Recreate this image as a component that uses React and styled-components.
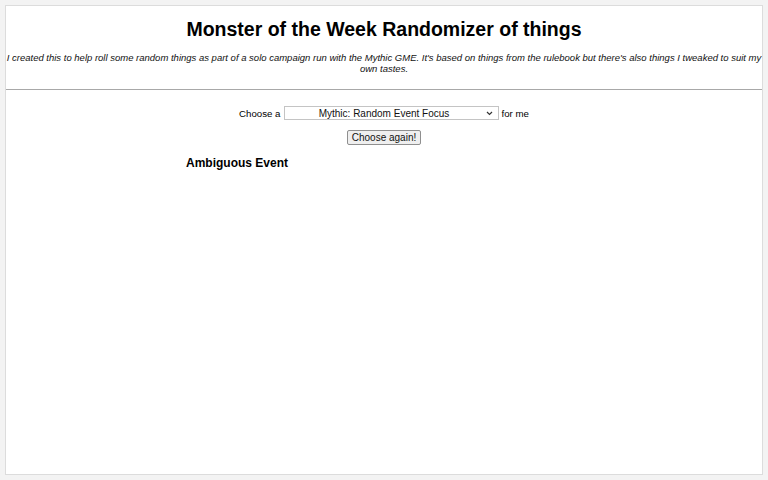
import React, { useState } from 'react';
import styled, { createGlobalStyle } from 'styled-components';

const GlobalStyle = createGlobalStyle`
  html, body {
    margin: 0;
    padding: 0;
    background: #f3f3f3;
    font-family: "Liberation Sans", Arial, sans-serif;
  }
`;

const Page = styled.div`
  padding: 5px;
  height: 480px;
  box-sizing: border-box;
`;

const Panel = styled.main`
  height: 100%;
  box-sizing: border-box;
  background: #fff;
  border: 1px solid #dcdcdc;
  color: #000;
`;

const Header = styled.header`
  text-align: center;
  padding: 11px 0 0;

  h1 {
    margin: 0;
    font-size: 19.5px;
    line-height: 24px;
    font-weight: bold;
  }

  p {
    margin: 11px 0 0;
    font-size: 9.5px;
    line-height: 11px;
    font-style: italic;
    color: #111;
  }
`;

const Rule = styled.hr`
  border: none;
  border-top: 1px solid #a8a8a8;
  margin: 15px 0 0;
`;

const chevron = `url("data:image/svg+xml,%3Csvg xmlns='http://www.w3.org/2000/svg' width='7' height='5' viewBox='0 0 7 5'%3E%3Cpath d='M1 1l2.5 2.5L6 1' fill='none' stroke='%23333' stroke-width='1.2'/%3E%3C/svg%3E")`;

const Picker = styled.form`
  display: flex;
  flex-direction: column;
  align-items: center;
  margin-top: 16px;
  font-size: 9.7px;

  .row {
    display: flex;
    align-items: center;
    gap: 3px;
  }

  select {
    appearance: none;
    width: 215px;
    height: 14px;
    font-size: 10px;
    font-family: inherit;
    color: #111;
    text-align-last: center;
    padding: 0 14px 0 0;
    border: 1px solid #c4c4c4;
    border-radius: 0;
    background: #fff ${chevron} no-repeat right 5px center;
  }

  button {
    margin-top: 10px;
    font-size: 10px;
    font-family: inherit;
    padding: 1px 4px;
    border: 1px solid #8f8f8f;
    border-radius: 2px;
    background: #efefef;
    color: #111;
  }
`;

const Result = styled.h3`
  width: 396px;
  margin: 11px auto 0;
  font-size: 12px;
  font-weight: bold;
`;

const TABLES = {
  'Mythic: Random Event Focus': ['Ambiguous Event', 'Remote Event', 'NPC Action', 'Introduce a new NPC'],
};

function App() {
  const [table, setTable] = useState('Mythic: Random Event Focus');
  const [result, setResult] = useState('Ambiguous Event');

  const roll = (e) => {
    e.preventDefault();
    const list = TABLES[table];
    setResult(list[Math.floor(Math.random() * list.length)]);
  };

  return (
    <Page>
      <GlobalStyle />
      <Panel>
        <Header>
          <h1>Monster of the Week Randomizer of things</h1>
          <p>
            I created this to help roll some random things as part of a solo campaign run with the Mythic GME. It's based on things from the rulebook but there's also things I tweaked to suit my own tastes.
          </p>
        </Header>
        <Rule />
        <Picker onSubmit={roll}>
          <div className="row">
            Choose a
            <select value={table} onChange={e => setTable(e.target.value)}>
              {Object.keys(TABLES).map(t => <option key={t}>{t}</option>)}
            </select>
            for me
          </div>
          <button type="submit">Choose again!</button>
        </Picker>
        <Result>{result}</Result>
      </Panel>
    </Page>
  );
}

export default App;
